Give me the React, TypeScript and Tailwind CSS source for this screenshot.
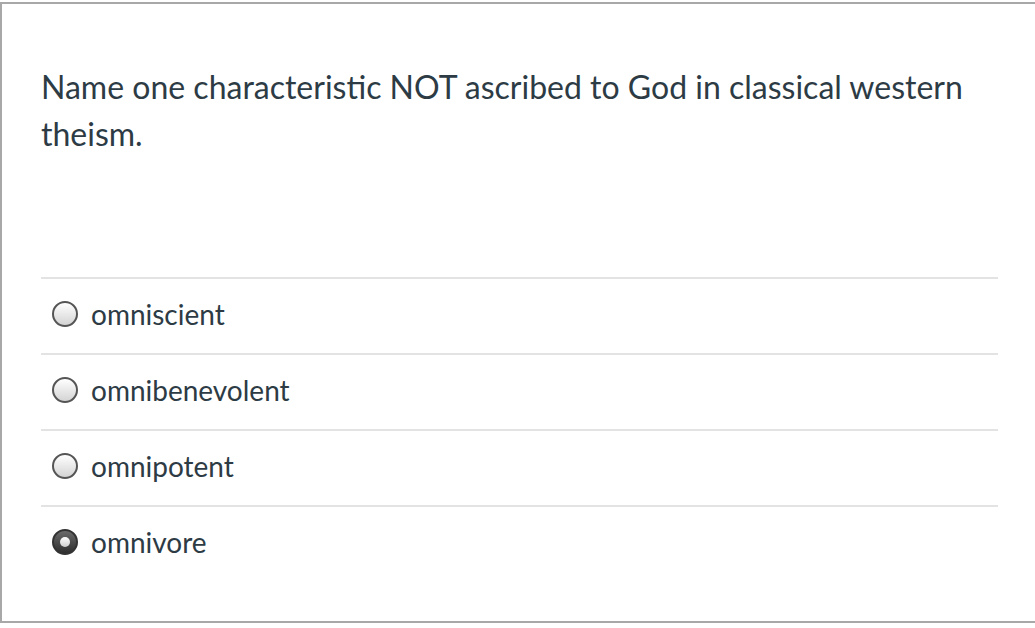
import React from "react";

const ANSWERS = ["omniscient", "omnibenevolent", "omnipotent", "omnivore"];
const SELECTED = "omnivore";

function Radio({ checked }: { checked: boolean }) {
  if (checked) {
    return (
      <span className="flex h-[26px] w-[26px] shrink-0 items-center justify-center rounded-full border-2 border-[#333] bg-gradient-to-b from-[#6b6b6b] to-[#2f2f2f]">
        <span className="h-[10px] w-[10px] rounded-full bg-gradient-to-b from-white to-[#cfcfcf]" />
      </span>
    );
  }
  return (
    <span className="h-[26px] w-[26px] shrink-0 rounded-full border-2 border-[#555] bg-gradient-to-b from-white to-[#d4d4d4]" />
  );
}

export default function App() {
  return (
    <div className="h-[628px] w-[1035px] bg-white pt-[2px] font-['Lato','Liberation_Sans',sans-serif] text-[#2d3b45]">
      <div className="h-[621px] border-l-2 border-t-2 border-b-2 border-[#a8a8a8] pl-[39px] pr-[37px] pt-[59px]">
        <p className="text-[32px] leading-[47px]">
          Name one characteristic NOT ascribed to God in classical western theism.
        </p>
        <div className="mt-[120px] border-t-2 border-[#e3e3e3]">
          {ANSWERS.map((a, i) => (
            <div
              key={a}
              className={`flex h-[76px] items-center gap-[13px] border-b-2 pb-[5px] pl-[11px] ${
                i < ANSWERS.length - 1 ? "border-[#e3e3e3]" : "border-transparent"
              }`}
            >
              <Radio checked={a === SELECTED} />
              <span className="text-[28px]">{a}</span>
            </div>
          ))}
        </div>
      </div>
    </div>
  );
}
